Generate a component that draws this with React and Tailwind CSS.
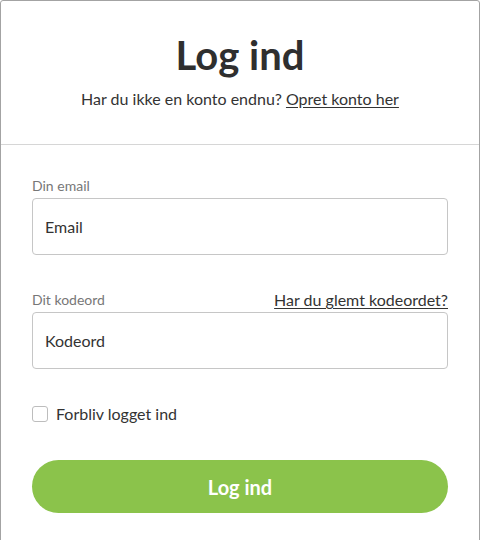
import React from "react";

function Field({ label, placeholder, type = "text", extra }) {
  return (
    <div>
      <div className="flex justify-between items-end h-[20px] mb-[2px]">
        <label className="text-[14px] text-[#777] leading-[20px]">{label}</label>
        {extra}
      </div>
      <input
        type={type}
        placeholder={placeholder}
        className="w-full h-[57px] border border-[#c6c6c6] rounded-[4px] px-[12px] text-[16px] text-[#333] placeholder:text-[#333] outline-none"
      />
    </div>
  );
}

export default function App() {
  return (
    <div className="bg-white min-h-[540px] font-['Lato','Noto_Sans',sans-serif] text-[#333]">
      <div className="w-[480px] border border-[#a3a3a3] rounded-t-[3px] bg-white">
        <div className="pt-[30px] pb-[33px] text-center border-b border-[#d6d6d6]">
          <h1 className="text-[40px] font-bold leading-[48px] text-[#2f2f2f]">Log ind</h1>
          <p className="mt-[8px] text-[16px] leading-[24px]">
            Har du ikke en konto endnu?{" "}
            <a href="#" className="underline underline-offset-2">Opret konto her</a>
          </p>
        </div>
        <div className="px-[31px] pt-[31px] pb-[40px]">
          <Field label="Din email" placeholder="Email" />
          <div className="mt-[35px]">
            <Field
              label="Dit kodeord"
              placeholder="Kodeord"
              type="password"
              extra={
                <a href="#" className="text-[16px] leading-[20px] underline underline-offset-2 text-[#333]">
                  Har du glemt kodeordet?
                </a>
              }
            />
          </div>
          <label className="mt-[33px] flex items-center gap-[8px] text-[16px]">
            <span className="w-[16px] h-[16px] border border-[#bdbdbd] rounded-[3px] bg-white" />
            Forbliv logget ind
          </label>
          <button className="mt-[34px] w-full h-[53px] rounded-full bg-[#8bc34b] text-white text-[20px] font-bold">
            Log ind
          </button>
        </div>
      </div>
    </div>
  );
}
